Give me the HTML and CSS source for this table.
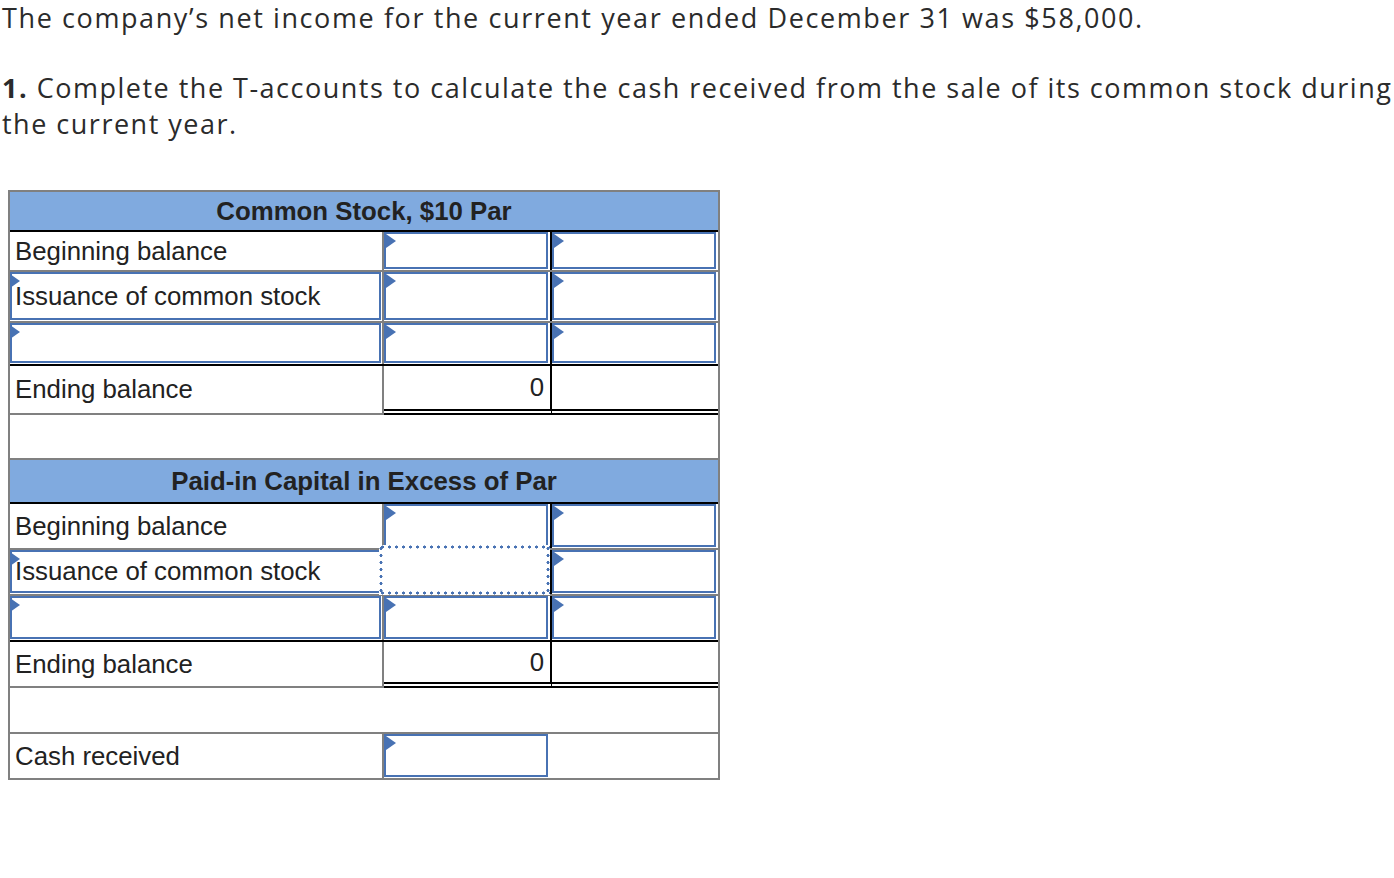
FILE: index.html
```html
<!DOCTYPE html>
<html>
<head>
<meta charset="utf-8">
<title>T-accounts</title>
<link rel="stylesheet" href="styles.css">
</head>
<body>
<p class="intro">The company’s net income for the current year ended December 31 was $58,000.</p>
<p class="question"><b>1.</b> Complete the T-accounts to calculate the cash received from the sale of its common stock during the current year.</p>

<div class="ledger">
  <div class="row head h40 bb-black"><span>Common Stock, $10 Par</span></div>
  <div class="row h40 bb-gray">
    <div class="cell c1"><span class="label">Beginning balance</span></div>
    <div class="cell c2 in"><div class="input"></div></div>
    <div class="cell c3 in"><div class="input"></div></div>
  </div>
  <div class="row h51 bb-gray">
    <div class="cell c1 in"><div class="input wide"><span class="label">Issuance of common stock</span></div></div>
    <div class="cell c2 in"><div class="input"></div></div>
    <div class="cell c3 in"><div class="input"></div></div>
  </div>
  <div class="row h43 bb-black">
    <div class="cell c1 in"><div class="input wide"></div></div>
    <div class="cell c2 in"><div class="input"></div></div>
    <div class="cell c3 in"><div class="input"></div></div>
  </div>
  <div class="row h49 ending">
    <div class="cell c1"><span class="label">Ending balance</span></div>
    <div class="cell c2 total"><span class="num">0</span></div>
    <div class="cell c3 total"></div>
  </div>
  <div class="row h45 bb-gray"></div>

  <div class="row head h44 bb-black"><span>Paid-in Capital in Excess of Par</span></div>
  <div class="row h46 bb-gray">
    <div class="cell c1"><span class="label">Beginning balance</span></div>
    <div class="cell c2 in"><div class="input"></div></div>
    <div class="cell c3 in"><div class="input"></div></div>
  </div>
  <div class="row h46 bb-gray">
    <div class="cell c1 in"><div class="input wide"><span class="label">Issuance of common stock</span></div></div>
    <div class="cell c2 in"><div class="input focus"></div></div>
    <div class="cell c3 in"><div class="input"></div></div>
  </div>
  <div class="row h46 bb-black">
    <div class="cell c1 in"><div class="input wide"></div></div>
    <div class="cell c2 in"><div class="input"></div></div>
    <div class="cell c3 in"><div class="input"></div></div>
  </div>
  <div class="row h46 ending">
    <div class="cell c1"><span class="label">Ending balance</span></div>
    <div class="cell c2 total"><span class="num">0</span></div>
    <div class="cell c3 total"></div>
  </div>
  <div class="row h46 bb-gray"></div>
  <div class="row h44">
    <div class="cell c1"><span class="label">Cash received</span></div>
    <div class="cell c2 in plain"><div class="input"></div></div>
    <div class="cell c3"></div>
  </div>
</div>
</body>
</html>
```

FILE: styles.css
```css
html, body {
  margin: 0;
  background: #fff;
}

body {
  padding: 2px 0 0 2px;
  font-family: "Open Sans", "Liberation Sans", sans-serif;
  color: #2b2b2b;
}

.intro {
  margin: 0;
  font-size: 27px;
  letter-spacing: 1.6px;
  line-height: 32px;
}

.question {
  margin: 36px 0 0 0;
  font-size: 27px;
  letter-spacing: 1.5px;
  line-height: 36px;
}

.question b {
  font-weight: 700;
}

.ledger {
  margin: 48px 0 0 6px;
  width: 712px;
  box-sizing: border-box;
  border: 2px solid #808080;
  font-family: "Liberation Sans", Arial, sans-serif;
  font-size: 25.8px;
  color: #222;
}

.row {
  display: flex;
  box-sizing: border-box;
}

.h40 { height: 40px; }
.h43 { height: 43px; }
.h44 { height: 44px; }
.h45 { height: 45px; }
.h46 { height: 46px; }
.h49 { height: 49px; }
.h51 { height: 51px; }

.bb-black { border-bottom: 2px solid #000; }
.bb-gray { border-bottom: 2px solid #808080; }

.head {
  background: #80aadf;
  justify-content: center;
  align-items: center;
  font-weight: bold;
}

.cell {
  display: flex;
  align-items: center;
  box-sizing: border-box;
}

.c1 {
  width: 374px;
  border-right: 2px solid #808080;
}

.c2 {
  width: 168px;
  border-right: 2px solid #000;
}

.c2.plain {
  border-right-color: #fff;
}

.c3 {
  width: 166px;
}

.in {
  align-items: stretch;
}

.label {
  padding-left: 5px;
  white-space: nowrap;
}

.input {
  position: relative;
  box-sizing: border-box;
  width: calc(100% - 2px);
  height: calc(100% - 1px);
  border: 2px solid #4872b3;
  background: #fff;
  display: flex;
  align-items: center;
}

.input.wide {
  width: calc(100% - 1px);
}

.input .label {
  padding-left: 3px;
}

.input::before {
  content: "";
  position: absolute;
  left: 0;
  top: 0;
  border-left: 10px solid #4872b3;
  border-top: 7px solid transparent;
  border-bottom: 7px solid transparent;
}

.input.wide::before {
  left: -2px;
}

.input.focus {
  border: none;
  margin: -5px 0 0 -5px;
  width: calc(100% + 5px);
  height: calc(100% + 6px);
  background:
    radial-gradient(circle, #4872b3 1.3px, transparent 1.8px) 0 0 / 7px 4px repeat-x,
    radial-gradient(circle, #4872b3 1.3px, transparent 1.8px) 0 100% / 7px 4px repeat-x,
    radial-gradient(circle, #4872b3 1.3px, transparent 1.8px) 0 0 / 4px 7px repeat-y,
    radial-gradient(circle, #4872b3 1.3px, transparent 1.8px) 100% 0 / 4px 7px repeat-y,
    #fff;
}

.input.focus::before {
  display: none;
}

.ending .c1 {
  border-bottom: 2px solid #808080;
}

.ending .total {
  border-bottom: 6px double #000;
}

.num {
  margin-left: auto;
  padding-right: 6px;
}
```
